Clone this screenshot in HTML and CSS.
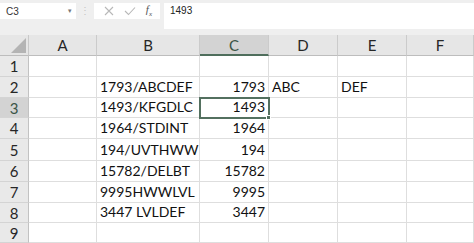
FILE: index.html
```html
<!DOCTYPE html>
<html lang="en">

<head>
    <meta charset="UTF-8">
    <meta name="viewport" content="width=device-width, initial-scale=1.0">
    <title>Sheet</title>
    <link rel="stylesheet" href="styles.css">
</head>

<body>
    <div class="toolbar">
        <div class="namebox">
            <span>C3</span>
            <span class="drop">&#9662;</span>
        </div>
        <div class="grip">&#8942;</div>
        <div class="fnbox">
            <svg width="10" height="10" viewBox="0 0 10 10"><path d="M1 1 L9 9 M9 1 L1 9" stroke="#b8b8b8" stroke-width="1.1" fill="none"/></svg>
            <svg width="12" height="10" viewBox="0 0 12 10"><path d="M1 5 L4.5 8.5 L11 1.5" stroke="#b8b8b8" stroke-width="1.1" fill="none"/></svg>
            <span class="fx">f<sub>x</sub></span>
        </div>
        <div class="formula">1493</div>
    </div>

    <div class="sheet">
        <div class="corner"><span class="tri"></span></div>
        <div class="colhead">A</div>
        <div class="colhead">B</div>
        <div class="colhead sel">C</div>
        <div class="colhead">D</div>
        <div class="colhead">E</div>
        <div class="colhead">F</div>

        <div class="rowhead">1</div>
        <div class="cell"></div><div class="cell"></div><div class="cell"></div><div class="cell"></div><div class="cell"></div><div class="cell"></div>

        <div class="rowhead">2</div>
        <div class="cell"></div><div class="cell">1793/ABCDEF</div><div class="cell num">1793</div><div class="cell">ABC</div><div class="cell">DEF</div><div class="cell"></div>

        <div class="rowhead sel">3</div>
        <div class="cell"></div><div class="cell">1493/KFGDLC</div><div class="cell num active">1493<span class="handle"></span></div><div class="cell"></div><div class="cell"></div><div class="cell"></div>

        <div class="rowhead">4</div>
        <div class="cell"></div><div class="cell">1964/STDINT</div><div class="cell num">1964</div><div class="cell"></div><div class="cell"></div><div class="cell"></div>

        <div class="rowhead">5</div>
        <div class="cell"></div><div class="cell">194/UVTHWW</div><div class="cell num">194</div><div class="cell"></div><div class="cell"></div><div class="cell"></div>

        <div class="rowhead">6</div>
        <div class="cell"></div><div class="cell">15782/DELBT</div><div class="cell num">15782</div><div class="cell"></div><div class="cell"></div><div class="cell"></div>

        <div class="rowhead">7</div>
        <div class="cell"></div><div class="cell">9995HWWLVL</div><div class="cell num">9995</div><div class="cell"></div><div class="cell"></div><div class="cell"></div>

        <div class="rowhead">8</div>
        <div class="cell"></div><div class="cell">3447 LVLDEF</div><div class="cell num">3447</div><div class="cell"></div><div class="cell"></div><div class="cell"></div>

        <div class="rowhead">9</div>
        <div class="cell"></div><div class="cell"></div><div class="cell"></div><div class="cell"></div><div class="cell"></div><div class="cell"></div>
    </div>
</body>

</html>
```

FILE: styles.css
```css
* {
    margin: 0;
    padding: 0;
    box-sizing: border-box;
}

body {
    width: 474px;
    height: 243px;
    overflow: hidden;
    background: #fff;
    font-family: Lato, "Liberation Sans", sans-serif;
    color: #111;
}

/* formula bar */
.toolbar {
    height: 35px;
    background: #efefef;
    display: flex;
    align-items: flex-start;
    padding-top: 3px;
    font-family: "Liberation Sans", sans-serif;
    font-size: 10px;
}

.namebox {
    width: 76px;
    height: 16px;
    background: #fff;
    display: flex;
    justify-content: space-between;
    align-items: center;
    padding: 0 4px 0 6px;
    color: #333;
}

.drop {
    font-size: 7px;
    color: #777;
}

.grip {
    width: 18px;
    text-align: center;
    color: #c4c4c4;
    line-height: 16px;
}

.fnbox {
    width: 66px;
    height: 16px;
    background: #fff;
    display: flex;
    align-items: center;
    justify-content: space-between;
    padding: 0 8px 0 10px;
}

.fx {
    font-family: "Liberation Serif", serif;
    font-style: italic;
    font-size: 11px;
    color: #555;
}

.fx sub {
    font-size: 7px;
}

.formula {
    flex: 1;
    height: 26px;
    margin-left: 4px;
    background: #fff;
    padding: 2px 6px;
    color: #222;
}

/* grid */
.sheet {
    display: grid;
    grid-template-columns: 29px 68px 103px 69px 69px 69px 1fr;
    grid-template-rows: 21px 21px 21px 20px 21px 22px 21px 21px 20px 20px;
    font-size: 14px;
}

.corner {
    background: #e6e6e6;
    border-right: 1px solid #c9c9c9;
    border-bottom: 1px solid #bdbdbd;
    position: relative;
}

.tri {
    position: absolute;
    right: 2px;
    bottom: 2px;
    width: 0;
    height: 0;
    border-left: 15px solid transparent;
    border-bottom: 15px solid #b4b4b4;
}

.colhead {
    background: #e6e6e6;
    border-right: 1px solid #cbcbcb;
    border-bottom: 1px solid #bdbdbd;
    display: flex;
    align-items: center;
    justify-content: center;
    color: #262626;
    font-size: 15px;
}

.colhead.sel {
    background: #d3d3d3;
    border-bottom: 2px solid #4f6e5c;
    color: #3b5546;
}

.rowhead {
    background: #e9e9e9;
    border-right: 1px solid #c2c2c2;
    border-bottom: 1px solid #d4d4d4;
    display: flex;
    align-items: center;
    justify-content: center;
    color: #262626;
    font-size: 15px;
}

.rowhead.sel {
    background: #d3d3d3;
    color: #3b5546;
}

.cell {
    border-right: 1px solid #dedede;
    border-bottom: 1px solid #dedede;
    display: flex;
    align-items: flex-end;
    padding: 0 3px 2px;
    white-space: nowrap;
    line-height: 17px;
}

.cell.num {
    justify-content: flex-end;
}

.cell.active {
    outline: 2px solid #53705f;
    outline-offset: -1px;
    position: relative;
}

.handle {
    position: absolute;
    right: -3px;
    bottom: -3px;
    width: 5px;
    height: 5px;
    background: #53705f;
    border: 1px solid #fff;
}
```
